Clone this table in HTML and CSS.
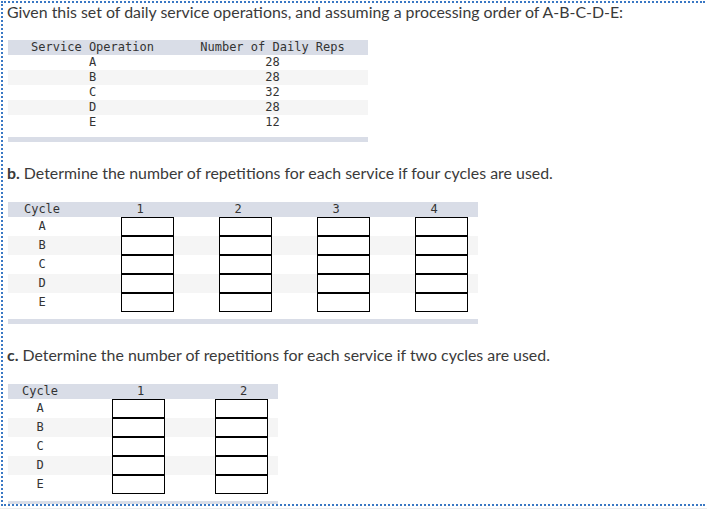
FILE: index.html
```html
<!DOCTYPE html>
<html>
<head>
<meta charset="utf-8">
<link rel="stylesheet" href="styles.css">
</head>
<body>
<div class="frame">
  <p class="intro">Given this set of daily service operations, and assuming a processing order of A-B-C-D-E:</p>
  <div class="tbl ta">
    <div class="row head"><span>Service Operation</span><span>Number of Daily Reps</span></div>
    <div class="row"><span>A</span><span>28</span></div>
    <div class="row alt"><span>B</span><span>28</span></div>
    <div class="row"><span>C</span><span>32</span></div>
    <div class="row alt"><span>D</span><span>28</span></div>
    <div class="row"><span>E</span><span>12</span></div>
    <div class="foot"></div>
  </div>

  <p class="q"><b>b.</b> Determine the number of repetitions for each service if four cycles are used.</p>
  <div class="tbl tb">
    <div class="row head"><span class="lab">Cycle</span><span>1</span><span>2</span><span>3</span><span class="last">4</span></div>
    <div class="row"><span class="lab">A</span><span><i class="box"></i></span><span><i class="box"></i></span><span><i class="box"></i></span><span><i class="box"></i></span></div>
    <div class="row alt"><span class="lab">B</span><span><i class="box"></i></span><span><i class="box"></i></span><span><i class="box"></i></span><span><i class="box"></i></span></div>
    <div class="row"><span class="lab">C</span><span><i class="box"></i></span><span><i class="box"></i></span><span><i class="box"></i></span><span><i class="box"></i></span></div>
    <div class="row alt"><span class="lab">D</span><span><i class="box"></i></span><span><i class="box"></i></span><span><i class="box"></i></span><span><i class="box"></i></span></div>
    <div class="row"><span class="lab">E</span><span><i class="box"></i></span><span><i class="box"></i></span><span><i class="box"></i></span><span><i class="box"></i></span></div>
    <div class="foot"></div>
  </div>

  <p class="q"><b>c.</b> Determine the number of repetitions for each service if two cycles are used.</p>
  <div class="tbl tc">
    <div class="row head"><span class="lab">Cycle</span><span>1</span><span class="last">2</span></div>
    <div class="row"><span class="lab">A</span><span><i class="box"></i></span><span><i class="box"></i></span></div>
    <div class="row alt"><span class="lab">B</span><span><i class="box"></i></span><span><i class="box"></i></span></div>
    <div class="row"><span class="lab">C</span><span><i class="box"></i></span><span><i class="box"></i></span></div>
    <div class="row alt"><span class="lab">D</span><span><i class="box"></i></span><span><i class="box"></i></span></div>
    <div class="row"><span class="lab">E</span><span><i class="box"></i></span><span><i class="box"></i></span></div>
    <div class="foot"></div>
  </div>
</div>
<div class="rule"></div>
</body>
</html>
```

FILE: styles.css
```css
html, body {
  margin: 0;
  padding: 0;
  background: #fff;
  overflow: hidden;
}
body {
  font-family: "Lato", "Open Sans", sans-serif;
  color: #333;
}
.frame {
  margin: 1px 0 0 1px;
  width: 704px;
  box-sizing: border-box;
  border: 2px dotted #3a78c4;
  border-right: none;
  padding: 0 0 0 5px;
  height: 505px;
  overflow: hidden;
}
.intro, .q {
  margin: 0;
  font-size: 15.9px;
  line-height: 20px;
  margin-left: -1px;
  color: #3a3a3a;
}
.intro {
  margin-top: -1px;
}
.q {
  margin-top: 21px;
}
.q b {
  font-weight: 700;
}
.tbl {
  margin-top: 18px;
  font-family: "DejaVu Sans Mono", "Liberation Mono", monospace;
  font-size: 12px;
  color: #333;
}
.q + .tbl {
  margin-top: 19px;
}
.row {
  display: grid;
  height: 15px;
  line-height: 15px;
  text-align: center;
}
.row.head {
  background: #d9dde7;
}
.row.alt {
  background: #f5f5f5;
}
.foot {
  margin-top: 7px;
  height: 5px;
  background: #d9dde7;
}
.ta { width: 360px; }
.ta .row { grid-template-columns: 169px 191px; }

.tb { width: 470px; }
.tb .row { grid-template-columns: 83px 98px 98px 98px 93px; }
.tb .row:not(.head) { height: 19px; line-height: 19px; }
.tb .lab { padding-right: 15px; }
.tb .last { padding-left: 5px; }
.tb .box { margin-left: 30px; }

.tc { width: 270px; }
.tc .row { grid-template-columns: 81px 103px 86px; }
.tc .row:not(.head) { height: 19px; line-height: 19px; }
.tc .lab { padding-right: 17px; }
.tc .last { padding-left: 17px; }
.tc .box { margin-left: 23px; }

.row span {
  display: block;
}
.box {
  display: block;
  width: 53px;
  height: 19px;
  box-sizing: border-box;
  border: 1px solid #000;
  background: #fff;
}
.tb .row span, .tc .row span { text-align: center; }
.tb .row:not(.head) span:not(.lab), .tc .row:not(.head) span:not(.lab) { text-align: left; }
.rule {
  margin-top: 2px;
  height: 1px;
  background: #ececec;
}
```
